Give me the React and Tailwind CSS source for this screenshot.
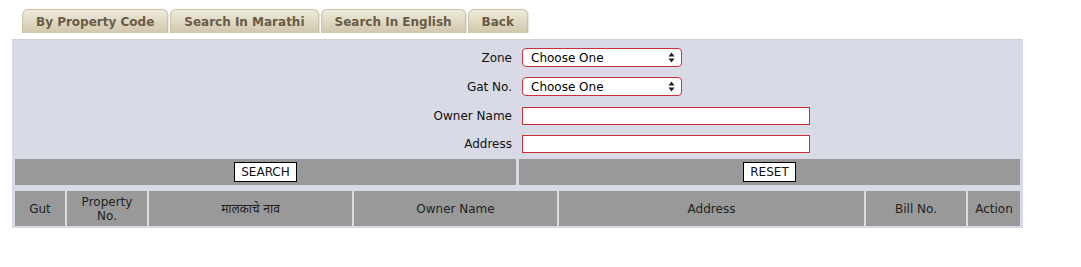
import React from "react";

const font = { fontFamily: '"DejaVu Sans", Verdana, "Noto Sans", sans-serif' };

function Tab({ children }) {
  return (
    <div className="h-[24px] px-[13px] flex items-center rounded-t-[6px] border border-b-0 border-[#c9c2a6] bg-gradient-to-b from-[#efebdc] to-[#cfc8ab] text-[12px] font-bold text-[#6a5a46] shadow-[1px_0_1px_rgba(0,0,0,0.12)]">
      {children}
    </div>
  );
}

function Arrows() {
  return (
    <svg width="7" height="11" viewBox="0 0 7 11" className="absolute right-[7px] top-[4px] pointer-events-none">
      <path d="M3.5 0.5 L6.5 4.5 L0.5 4.5 Z" fill="#222" />
      <path d="M3.5 10.5 L6.5 6.5 L0.5 6.5 Z" fill="#222" />
    </svg>
  );
}

function Select() {
  return (
    <div className="relative w-[160px] h-[19px]">
      <select className="appearance-none block w-full h-full rounded-[4px] border border-[#c8313a] bg-white pl-[8px] text-[12px] text-black outline-none" style={font}>
        <option>Choose One</option>
      </select>
      <Arrows />
    </div>
  );
}

function Input() {
  return <input className="block w-[288px] h-[18px] border border-[#c8313a] bg-white outline-none" />;
}

function Row({ label, children, h, className = "" }) {
  return (
    <div className={`flex items-center ${h} ${className}`}>
      <div className="w-[497px] text-right">{label}</div>
      <div className="ml-[10px]">{children}</div>
    </div>
  );
}

const cols = [
  ["Gut", "w-[50px]"],
  ["Property No.", "w-[80px]"],
  ["मालकाचे नाव", "w-[203px]"],
  ["Owner Name", "w-[203px]"],
  ["Address", "w-[305px]"],
  ["Bill No.", "w-[100px]"],
  ["Action", "w-[52px]"],
];

export default function App() {
  return (
    <div className="bg-white w-[1081px] h-[267px] pt-[9px] pl-[12px]" style={font}>
      <div className="flex gap-[2px] pl-[10px]">
        <Tab>By Property Code</Tab>
        <Tab>Search In Marathi</Tab>
        <Tab>Search In English</Tab>
        <Tab>Back</Tab>
      </div>
      <div className="mt-[6px] border-t border-[#cfcfd4] w-[1011px] bg-[#d8dae6] px-[3px] pt-[8px] pb-[2px]">
        <div className="flex flex-col text-[12px] text-[#111]">
          <Row label="Zone" h="h-[19px]"><Select /></Row>
          <Row label="Gat No." h="h-[19px]" className="mt-[10px]"><Select /></Row>
          <Row label="Owner Name" h="h-[18px]" className="mt-[11px]"><Input /></Row>
          <Row label="Address" h="h-[18px]" className="mt-[10px]"><Input /></Row>
        </div>
        <div className="mt-[6px] flex gap-[3px]">
          <div className="flex-1 h-[26px] bg-[#999999] flex items-center justify-center">
            <button className="h-[20px] px-[6px] bg-white border border-black text-[12px] text-[#111] leading-none" style={font}>SEARCH</button>
          </div>
          <div className="flex-1 h-[26px] bg-[#999999] flex items-center justify-center">
            <button className="h-[20px] px-[6px] bg-white border border-black text-[12px] text-[#111] leading-none" style={font}>RESET</button>
          </div>
        </div>
        <div className="mt-[6px] flex gap-[2px]">
          {cols.map(([t, w]) => (
            <div key={t} className={`${w} h-[35px] bg-[#999999] flex items-center justify-center text-center text-[12px] leading-[14px] text-[#222]`} style={{ fontFamily: '"DejaVu Sans", Verdana, "Noto Sans", "Noto Sans Devanagari", sans-serif' }}>
              {t === "Property No." ? (<span>Property<br />No.</span>) : t}
            </div>
          ))}
        </div>
      </div>
    </div>
  );
}
